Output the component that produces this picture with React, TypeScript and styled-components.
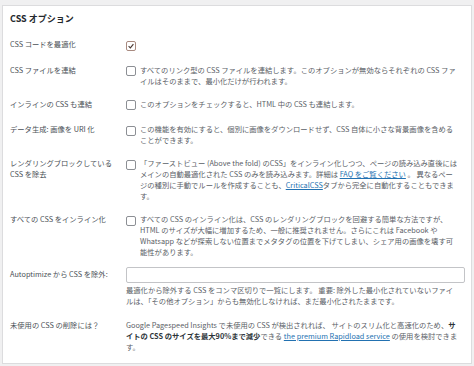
import styled, { createGlobalStyle } from 'styled-components';

const GlobalStyle = createGlobalStyle`
	html, body {
		margin: 0;
		padding: 0;
		background: #f0f0f1;
	}
	body {
		font-family: 'Noto Sans CJK JP', 'Noto Sans', sans-serif;
		color: #3c434a;
	}
`;

const Page = styled.div`
	width: 474px;
	height: 366px;
	box-sizing: border-box;
	padding: 5px 2px 0 2px;
	overflow: hidden;
`;

const Panel = styled.section`
	width: 470px;
	height: 359px;
	box-sizing: border-box;
	background: #fff;
	border: 1px solid #dcdcde;
	padding: 0 7px;
`;

const Title = styled.h2`
	margin: 7px 0 0 0;
	font-size: 9px;
	line-height: 12px;
	font-weight: 700;
	color: #23282d;
`;

const Table = styled.div`
	margin-top: 8px;
	display: flex;
	flex-direction: column;
`;

const Row = styled.div<{ $bottom?: number }>`
	display: grid;
	grid-template-columns: 116px 1fr;
	padding: 6px 0 ${(p) => p.$bottom ?? 6}px 0;
	font-size: 7.3px;
	line-height: 11px;
`;

const Label = styled.div<{ $offset?: number }>`
	color: #4a5056;
	white-space: nowrap;
	padding-top: ${(p) => p.$offset ?? 0}px;
`;

const Field = styled.div`
	display: flex;
	align-items: flex-start;
	gap: 4px;
`;

const FieldStack = styled.div`
	display: flex;
	flex-direction: column;
	gap: 2px;
`;

const Box = styled.span<{ $checked?: boolean }>`
	flex: none;
	width: 8px;
	height: 8px;
	margin-top: 1.5px;
	border: 1px solid ${(p) => (p.$checked ? '#a88a80' : '#8c8f94')};
	border-radius: 2px;
	background: #fff;
	display: flex;
	align-items: center;
	justify-content: center;
	svg {
		width: 8px;
		height: 8px;
	}
`;

const Desc = styled.div`
	color: #5a6066;
	white-space: nowrap;
`;

const Link = styled.a`
	color: #2271b1;
	text-decoration: underline;
`;

const Strong = styled.b`
	color: #2c3338;
	font-weight: 700;
`;

const TextInput = styled.div`
	width: 339px;
	height: 16px;
	box-sizing: border-box;
	border: 1px solid #c3c4c7;
	border-radius: 2px;
	background: #fff;
`;

const Check = () => (
	<svg viewBox="0 0 10 10">
		<path d="M2 5.2 L4.2 7.3 L8 2.6" fill="none" stroke="#4b3a34" strokeWidth="1.4" />
	</svg>
);

const App = () => {
	return (
		<Page>
			<GlobalStyle />
			<Panel>
				<Title>CSS オプション</Title>
				<Table>
					<Row $bottom={8}>
						<Label>CSS コードを最適化</Label>
						<Field>
							<Box $checked>
								<Check />
							</Box>
						</Field>
					</Row>
					<Row>
						<Label>CSS ファイルを連結</Label>
						<Field>
							<Box />
							<Desc>
								すべてのリンク型の CSS ファイルを連結します。このオプションが無効ならそれぞれの CSS ファ
								<br />
								イルはそのままで、最小化だけが行われます。
							</Desc>
						</Field>
					</Row>
					<Row $bottom={8}>
						<Label>インラインの CSS も連結</Label>
						<Field>
							<Box />
							<Desc>このオプションをチェックすると、HTML 中の CSS も連結します。</Desc>
						</Field>
					</Row>
					<Row>
						<Label>データ生成: 画像を URI 化</Label>
						<Field>
							<Box />
							<Desc>
								この機能を有効にすると、個別に画像をダウンロードせず、CSS 自体に小さな背景画像を含める
								<br />
								ことができます。
							</Desc>
						</Field>
					</Row>
					<Row>
						<Label>
							レンダリングブロックしている
							<br />
							CSS を除去
						</Label>
						<Field>
							<Box />
							<Desc>
								「ファーストビュー (Above the fold) のCSS」をインライン化しつつ、ページの読み込み直後には
								<br />
								メインの自動最適化された CSS のみを読み込みます。詳細は <Link>FAQ をご覧ください</Link> 。 異なるペー
								<br />
								ジの種別に手動でルールを作成することも、<Link>CriticalCSS</Link>タブから完全に自動化することもできま
								<br />
								す。
							</Desc>
						</Field>
					</Row>
					<Row $bottom={3}>
						<Label>すべての CSS をインライン化</Label>
						<Field>
							<Box />
							<Desc>
								すべての CSS のインライン化は、CSS のレンダリングブロックを回避する簡単な方法ですが、
								<br />
								HTML のサイズが大幅に増加するため、一般に推奨されません。さらにこれは Facebook や
								<br />
								Whatsapp などが探索しない位置までメタタグの位置を下げてしまい、シェア用の画像を壊す可
								<br />
								能性があります。
							</Desc>
						</Field>
					</Row>
					<Row $bottom={7}>
						<Label $offset={2}>Autoptimize から CSS を除外:</Label>
						<FieldStack>
							<TextInput />
							<Desc>
								最適化から除外する CSS をコンマ区切りで一覧にします。 重要: 除外した最小化されていないファイ
								<br />
								ルは、「その他オプション」からも無効化しなければ、まだ最小化されたままです。
							</Desc>
						</FieldStack>
					</Row>
					<Row>
						<Label>未使用の CSS の削除には？</Label>
						<Desc>
							Google Pagespeed Insights で未使用の CSS が検出されれば、 サイトのスリム化と高速化のため、<Strong>サ</Strong>
							<br />
							<Strong>イトの CSS のサイズを最大90%まで減少</Strong>できる <Link>the premium Rapidload service</Link> の使用を検討できま
							<br />
							す。
						</Desc>
					</Row>
				</Table>
			</Panel>
		</Page>
	);
};

export default App;
